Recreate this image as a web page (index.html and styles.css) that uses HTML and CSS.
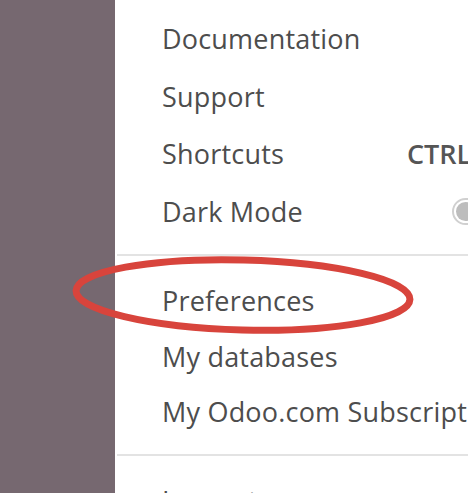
FILE: index.html
```html
<!DOCTYPE html>
<html lang="en">
<head>
<meta charset="utf-8">
<title>User menu</title>
<link rel="stylesheet" href="styles.css">
</head>
<body>
<div class="screen">
  <aside class="backdrop"></aside>
  <nav class="menu">
    <div class="group">
      <a class="item">Documentation</a>
      <a class="item">Support</a>
      <div class="item split"><span>Shortcuts</span><span class="kbd">CTRL + K</span></div>
      <div class="item split"><span>Dark Mode</span><span class="switch"><span class="knob"></span></span></div>
    </div>
    <hr class="sep">
    <div class="group compact">
      <a class="item">Preferences</a>
      <a class="item">My databases</a>
      <a class="item">My Odoo.com Subscription</a>
    </div>
    <hr class="sep sep-tight">
    <div class="group">
      <a class="item">Log out</a>
    </div>
  </nav>
  <svg class="annot" width="468" height="493" viewBox="0 0 468 493" aria-hidden="true">
    <ellipse cx="243" cy="295" rx="167" ry="35" transform="rotate(1.5 243 295)" fill="none" stroke="#d8443c" stroke-width="7"/>
  </svg>
</div>
</body>
</html>
```

FILE: styles.css
```css
* { box-sizing: border-box; }
html, body { margin: 0; padding: 0; background: #ffffff; }
.screen {
  position: relative;
  display: flex;
  width: 468px;
  height: 493px;
  overflow: hidden;
  font-family: "Open Sans", "Liberation Sans", sans-serif;
}
.backdrop {
  flex: 0 0 115px;
  background: #766870;
}
.menu {
  flex: 0 0 auto;
  width: 440px;
  padding-top: 10px;
  background: #ffffff;
  white-space: nowrap;
}
.group { display: flex; flex-direction: column; }
.item {
  display: block;
  padding: 0 46px 0 47px;
  font-size: 27px;
  letter-spacing: 0.2px;
  line-height: 57.5px;
  color: #4d4d4d;
  text-decoration: none;
}
.compact .item { line-height: 55.5px; }
.split {
  display: grid;
  grid-template-columns: 245px auto;
  align-items: center;
}
.kbd {
  font-weight: 600;
  letter-spacing: 0;
  color: #555555;
}
.switch {
  display: inline-block;
  margin-left: 45px;
  width: 52px;
  height: 27px;
  border: 2px solid #d0d0d0;
  border-radius: 14px;
  padding: 2px;
  background: #ffffff;
}
.knob {
  display: block;
  width: 19px;
  height: 19px;
  border-radius: 50%;
  background: #bdbdbd;
}
.sep {
  margin: 14px 0 17px 2px;
  border: 0;
  border-top: 2px solid #e3e3e3;
  height: 0;
}
.sep-tight { margin-bottom: 16px; }
.annot {
  position: absolute;
  left: 0;
  top: 0;
  pointer-events: none;
}
```
